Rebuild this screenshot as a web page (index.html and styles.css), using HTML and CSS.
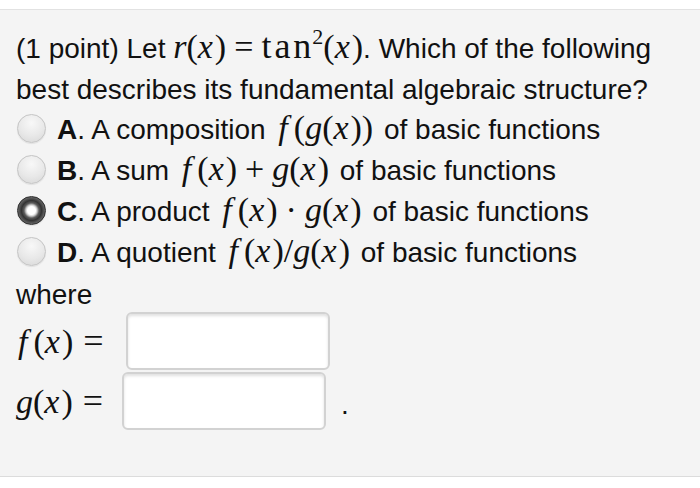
FILE: index.html
```html
<!DOCTYPE html>
<html>
<head>
<meta charset="utf-8">
<link rel="stylesheet" href="styles.css">
</head>
<body>
<div class="panel">
  <p class="question">(1 point) Let <span class="m"><i>r</i>(<i class="x">x</i>)<span class="op">=</span><span class="fn">tan</span><sup>2</sup>(<i class="x">x</i>)</span>. Which of the following best describes its fundamental algebraic structure?</p>
  <ul class="options">
    <li><span class="radio"></span><span class="txt"><b>A</b>. A composition <span class="m"><i class="f">f</i>(<i>g</i>(<i class="x">x</i>))</span> of basic functions</span></li>
    <li><span class="radio"></span><span class="txt"><b>B</b>. A sum <span class="m"><i class="f">f</i>(<i class="x">x</i>)<span class="op">+</span><i>g</i>(<i class="x">x</i>)</span> of basic functions</span></li>
    <li><span class="radio checked"></span><span class="txt"><b>C</b>. A product <span class="m"><i class="f">f</i>(<i class="x">x</i>)<span class="op">·</span><i>g</i>(<i class="x">x</i>)</span> of basic functions</span></li>
    <li><span class="radio"></span><span class="txt"><b>D</b>. A quotient <span class="m"><i class="f">f</i>(<i class="x">x</i>)/<i>g</i>(<i class="x">x</i>)</span> of basic functions</span></li>
  </ul>
  <p class="where">where</p>
  <div class="answers">
    <div class="ans a1"><span class="m lbl"><i class="f">f</i>(<i class="x">x</i>)<span class="op">=</span></span><span class="box"></span></div>
    <div class="ans a2"><span class="m lbl"><i>g</i>(<i class="x">x</i>)<span class="op">=</span></span><span class="box"></span><span class="dot">.</span></div>
  </div>
</div>
</body>
</html>
```
FILE: styles.css
```css
html, body {
  margin: 0;
  padding: 0;
  background: #ffffff;
}
body {
  padding-top: 9px;
  font-family: "Liberation Sans", Arial, sans-serif;
  color: #111;
}
.panel {
  background: #f4f4f4;
  border-top: 1px solid #e2e2e2;
  border-bottom: 1px solid #dcdcdc;
  height: 468px;
  box-sizing: border-box;
  padding: 18px 0 0 16px;
  font-size: 28px;
}
.question {
  margin: 0;
  line-height: 41px;
  width: 670px;
}
.m {
  font-family: "Liberation Serif", "Times New Roman", serif;
  font-size: 34px;
  line-height: 1;
  white-space: nowrap;
}
.m i {
  font-style: italic;
}
.m i.x {
  padding-right: 2px;
}
.m i.f {
  padding: 0 6px 0 2px;
}
.fn {
  font-size: 36px;
  letter-spacing: 3px;
}
.op {
  margin: 0 8px;
}
sup {
  font-size: 22px;
  line-height: 0;
  vertical-align: 14px;
  margin-left: -2px;
}
.options {
  list-style: none;
  margin: 0;
  padding: 0;
}
.options li {
  display: flex;
  align-items: center;
  height: 41px;
}
.options li:first-child {
  margin-top: -2px;
}
.options .m {
  margin: 0 3px;
}
.txt {
  white-space: nowrap;
}
.radio {
  width: 29px;
  height: 29px;
  border-radius: 50%;
  margin: 0 11px 0 1px;
  box-sizing: border-box;
  border: 1px solid #c4c4c4;
  background: radial-gradient(circle at 50% 30%, #f8f8f8 0%, #e8e8e8 55%, #d6d6d6 100%);
  box-shadow: 0 1px 1px rgba(0,0,0,0.08);
  flex: none;
}
.radio.checked {
  border: 1px solid #2a2a2a;
  background: radial-gradient(circle at 50% 50%, #ffffff 0 4px, #cfcfcf 5.5px, #5c5c5c 7.5px, #333 10px, #6e6e6e 14px);
}
.where {
  margin: 8px 0 0;
  line-height: 30px;
}
.answers {
  margin-top: 1px;
}
.ans {
  display: flex;
  align-items: center;
  height: 60px;
}
.lbl {
  white-space: nowrap;
}
.lbl .op {
  margin: 0 0 0 10px;
  font-size: 36px;
}
.box {
  display: block;
  height: 58px;
  width: 204px;
  background: #fff;
  border: 2px solid #d2d2d2;
  border-radius: 6px;
  box-sizing: border-box;
  box-shadow: inset 0 2px 3px rgba(0,0,0,0.12);
}
.a1 .box {
  margin-left: 22px;
}
.a2 .box {
  margin-left: 19px;
}
.dot {
  margin-left: 15px;
  margin-top: 8px;
}
```
